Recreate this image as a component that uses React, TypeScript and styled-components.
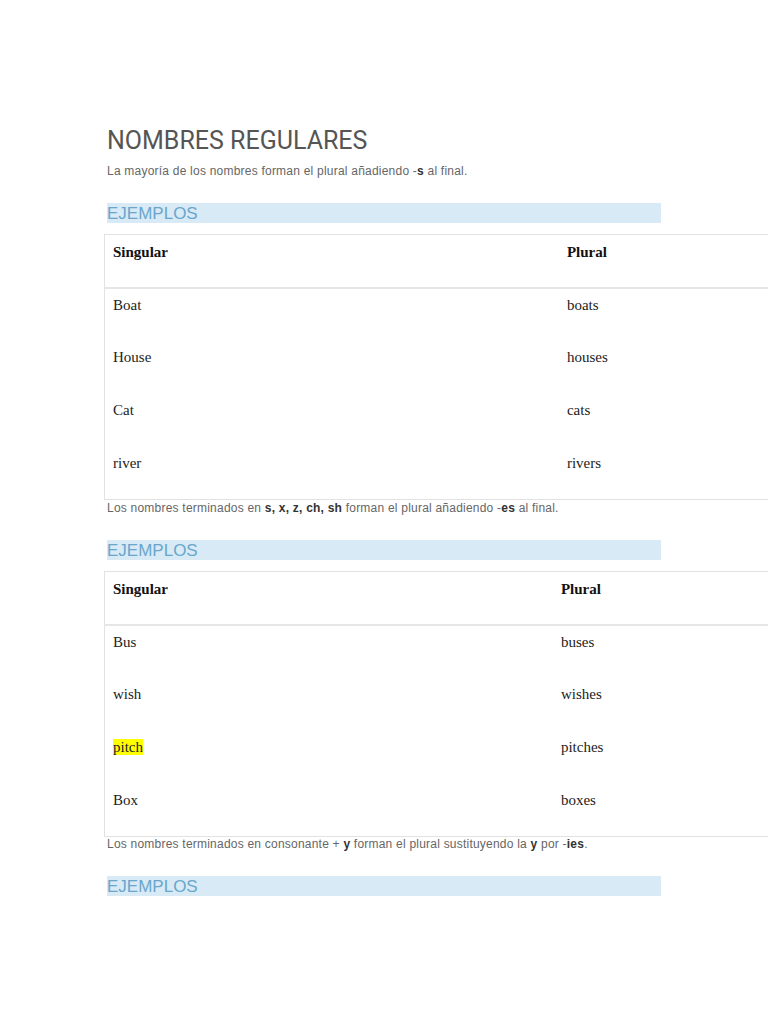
import React from "react";
import styled, { createGlobalStyle } from "styled-components";

const Global = createGlobalStyle`
  html, body { margin: 0; padding: 0; background: #fff; overflow-x: hidden; }
  body { font-family: "Liberation Sans", Arial, sans-serif; }
`;

const Page = styled.main`
  padding: 126px 0 40px 107px;
  width: 768px;
  box-sizing: border-box;
  overflow: hidden;
`;

const Title = styled.h1`
  margin: 0;
  font-family: Roboto, "Liberation Sans", Arial, sans-serif;
  font-weight: 400;
  font-size: 25px;
  line-height: 30px;
  color: #555;
`;

const Note = styled.p<{ $top: number }>`
  margin: ${(p) => p.$top}px 0 0;
  font-family: "Liberation Sans", Arial, sans-serif;
  font-size: 12px;
  line-height: 16px;
  letter-spacing: 0.22px;
  color: #666;
  b { color: #333; font-weight: 700; }
`;

const Bar = styled.h2`
  margin: 24px 0 0;
  width: 554px;
  height: 20px;
  background: #d8eaf5;
  color: #6aa6cc;
  font-family: "Liberation Sans", Arial, sans-serif;
  font-weight: 400;
  font-size: 17px;
  line-height: 21px;
  box-sizing: border-box;
`;

const Table = styled.table`
  margin: 11px 0 0 -3px;
  width: 820px;
  border-collapse: collapse;
  border: 1px solid #e2e2e2;
  font-family: "Liberation Serif", "Times New Roman", serif;
  font-size: 15px;
  color: #222;
`;

const Head = styled.th<{ $w: number }>`
  width: ${(p) => p.$w}px;
  text-align: left;
  vertical-align: top;
  font-weight: 700;
  padding: 9px 8px 0 8px;
  height: 53px;
  box-sizing: border-box;
  line-height: 17px;
  border-bottom: 2px solid #e6e6e6;
  color: #111;
`;

const Cell = styled.td`
  vertical-align: top;
  padding: 8px 8px 0 8px;
  height: 53px;
  box-sizing: border-box;
  line-height: 17px;
`;

const Mark = styled.span`
  background: #ffff00;
`;

type Row = [React.ReactNode, string];

const ExampleTable = ({ rows, first }: { rows: Row[]; first: number }) => (
  <Table>
    <thead>
      <tr>
        <Head $w={first}>Singular</Head>
        <Head $w={820 - first}>Plural</Head>
      </tr>
    </thead>
    <tbody>
      {rows.map((r, i) => (
        <tr key={i}>
          <Cell>{r[0]}</Cell>
          <Cell>{r[1]}</Cell>
        </tr>
      ))}
    </tbody>
  </Table>
);

export default function App() {
  return (
    <>
      <Global />
      <Page>
        <Title>NOMBRES REGULARES</Title>
        <Note $top={7}>
          La mayoría de los nombres forman el plural añadiendo -<b>s</b> al final.
        </Note>
        <Bar>EJEMPLOS</Bar>
        <ExampleTable
          first={455}
          rows={[
            ["Boat", "boats"],
            ["House", "houses"],
            ["Cat", "cats"],
            ["river", "rivers"],
          ]}
        />
        <Note $top={0}>
          Los nombres terminados en <b>s, x, z, ch, sh</b> forman el plural añadiendo -<b>es</b> al final.
        </Note>
        <Bar>EJEMPLOS</Bar>
        <ExampleTable
          first={449}
          rows={[
            ["Bus", "buses"],
            ["wish", "wishes"],
            [<Mark>pitch</Mark>, "pitches"],
            ["Box", "boxes"],
          ]}
        />
        <Note $top={-1}>
          Los nombres terminados en consonante + <b>y</b> forman el plural sustituyendo la <b>y</b> por -<b>ies</b>.
        </Note>
        <Bar>EJEMPLOS</Bar>
      </Page>
    </>
  );
}
